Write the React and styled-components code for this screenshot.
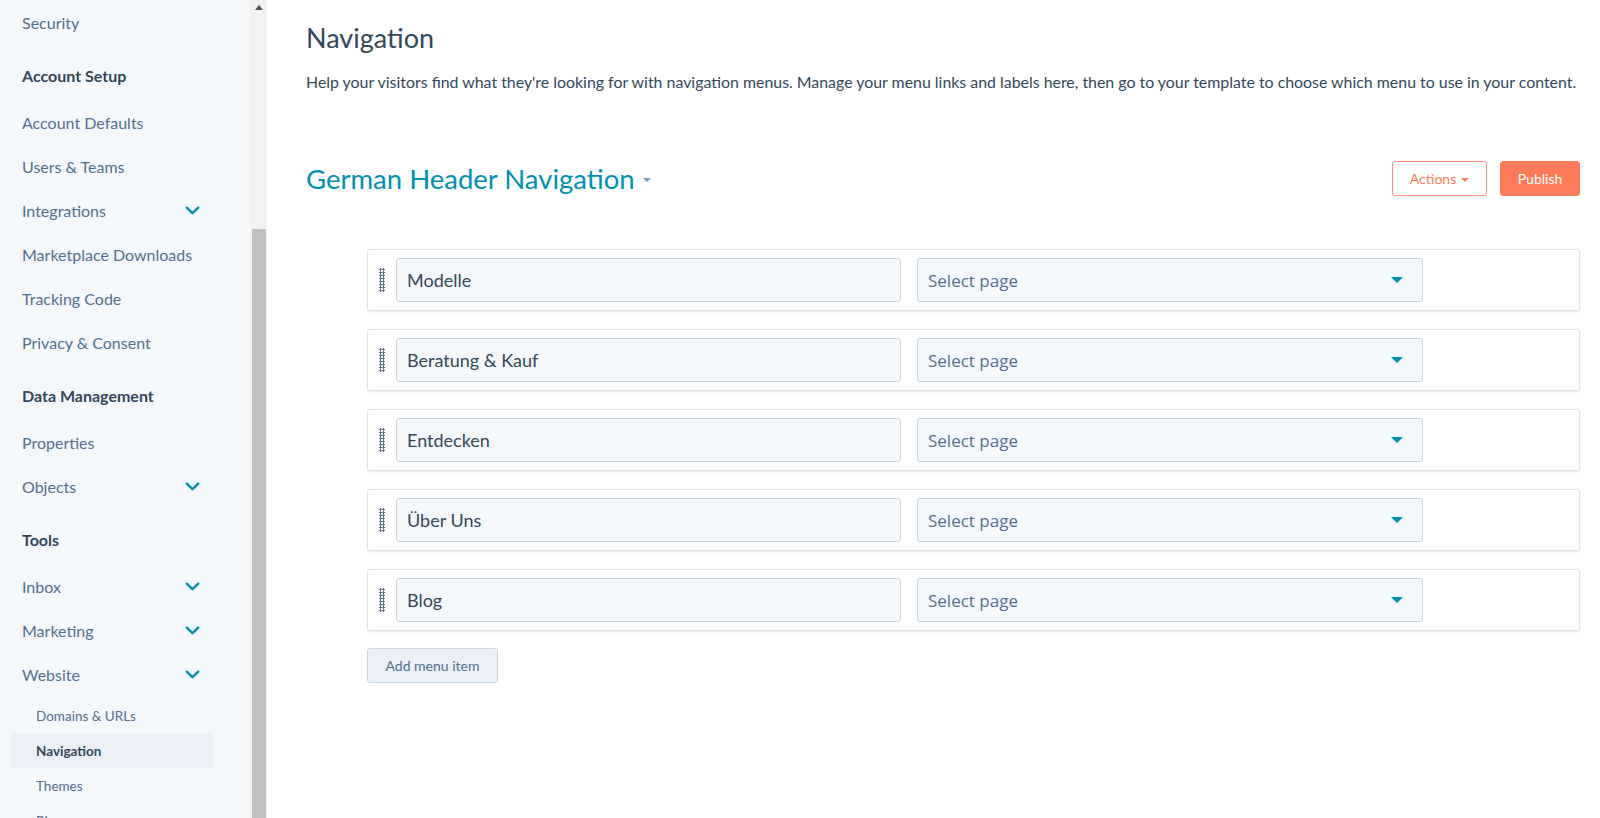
import React from "react";
import styled, { createGlobalStyle } from "styled-components";

const GlobalStyle = createGlobalStyle`
  html, body { margin: 0; padding: 0; height: 100%; }
  body {
    font-family: Lato, "Noto Sans", "Liberation Sans", sans-serif;
    color: #33475b;
    background: #fff;
    overflow: hidden;
  }
  #root { height: 100%; }
`;

const Page = styled.div`
  display: flex;
  height: 818px;
  overflow: hidden;
`;

const Sidebar = styled.nav`
  width: 250px;
  flex-shrink: 0;
  background: #f5f8fa;
  display: flex;
  flex-direction: column;
  overflow: hidden;
`;

const Scrollbar = styled.div`
  width: 17px;
  flex-shrink: 0;
  background: #f1f1f1;
  display: flex;
  flex-direction: column;
  align-items: center;
`;

const ScrollArrow = styled.div`
  width: 0;
  height: 0;
  margin-top: 5px;
  border-left: 4px solid transparent;
  border-right: 4px solid transparent;
  border-bottom: 5px solid #505050;
`;

const ScrollThumb = styled.div`
  width: 14px;
  margin-top: 219px;
  flex: 1;
  background: #c1c1c1;
`;

const NavItem = styled.div`
  display: flex;
  align-items: center;
  justify-content: space-between;
  height: 44px;
  padding: 0 50px 0 22px;
  font-size: 16px;
  color: #516f90;
  flex-shrink: 0;
`;

const SectionTitle = styled.div`
  display: flex;
  align-items: center;
  height: 50px;
  margin-top: 6px;
  padding-left: 22px;
  font-size: 16px;
  font-weight: 700;
  color: #33475b;
  flex-shrink: 0;
`;

const SubList = styled.div`
  display: flex;
  flex-direction: column;
  margin-top: 2px;
`;

const SubItem = styled.div`
  display: flex;
  align-items: center;
  height: 35px;
  margin: 0 36px 0 10px;
  padding-left: 26px;
  font-size: 13.5px;
  border-radius: 3px;
  flex-shrink: 0;
  font-weight: ${(p) => (p.$active ? 700 : 400)};
  color: ${(p) => (p.$active ? "#33475b" : "#516f90")};
  background: ${(p) => (p.$active ? "#eaf0f6" : "transparent")};
`;

const Chevron = () => (
  <svg width="15" height="9" viewBox="0 0 15 9" fill="none">
    <path d="M1.8 1.6 7.5 7.2l5.7-5.6" stroke="#0091ae" strokeWidth="2.4" strokeLinecap="round" strokeLinejoin="round" />
  </svg>
);

const Main = styled.main`
  flex: 1;
  min-width: 0;
  padding: 22px 20px 0 39px;
`;

const PageTitle = styled.h1`
  margin: 0;
  font-size: 27px;
  font-weight: 400;
  line-height: 32px;
  color: #33475b;
`;

const Description = styled.p`
  margin: 18px 0 0;
  font-size: 15.9px;
  line-height: 20px;
  color: #33475b;
  white-space: nowrap;
`;

const HeaderRow = styled.div`
  display: flex;
  align-items: center;
  justify-content: space-between;
  margin-top: 69px;
`;

const MenuName = styled.div`
  display: flex;
  align-items: center;
  gap: 8px;
  font-size: 27.5px;
  color: #0091ae;
  line-height: 35px;
`;

const SmallCaret = styled.span`
  width: 0;
  height: 0;
  margin-top: 2px;
  border-left: 4.5px solid transparent;
  border-right: 4.5px solid transparent;
  border-top: 4.5px solid ${(p) => p.$color};
`;

const Buttons = styled.div`
  display: flex;
  gap: 13px;
`;

const Button = styled.button`
  height: 35px;
  display: flex;
  align-items: center;
  justify-content: center;
  gap: 5px;
  border-radius: 3px;
  font-family: inherit;
  font-size: 14px;
  width: ${(p) => (p.$primary ? "80px" : "95px")};
  padding: 0;
  border: 1px solid ${(p) => (p.$primary ? "#ff7a59" : "#ff8f73")};
  color: ${(p) => (p.$primary ? "#fff" : "#ff7a59")};
  background: ${(p) => (p.$primary ? "#ff7a59" : "#fff")};
`;

const List = styled.div`
  margin: 53px 0 0 61px;
  display: flex;
  flex-direction: column;
  gap: 18px;
`;

const Row = styled.div`
  height: 62px;
  box-sizing: border-box;
  border: 1px solid #dfe3eb;
  border-radius: 3px;
  box-shadow: 0 1px 2px rgba(45, 62, 80, 0.1);
  display: flex;
  align-items: center;
  padding-left: 11px;
  background: #fff;
`;

const Handle = styled.div`
  width: 6px;
  height: 24px;
  margin-right: 11px;
  background-image: radial-gradient(circle, #425b76 1px, transparent 1.2px);
  background-size: 3px 3px;
  opacity: 0.85;
`;

const Field = styled.div`
  height: 44px;
  box-sizing: border-box;
  width: ${(p) => p.$w}px;
  background: #f5f8fa;
  border: 1px solid #cbd6e2;
  border-radius: 3px;
  display: flex;
  align-items: center;
  justify-content: space-between;
  padding: 0 19px 0 10px;
  font-size: 18px;
  color: #33475b;
`;

const SelectLabel = styled.span`
  font-family: "Open Sans", "Noto Sans", sans-serif;
  font-size: 17px;
  color: #516f90;
`;

const SelectCaret = styled.span`
  width: 0;
  height: 0;
  border-left: 6px solid transparent;
  border-right: 6px solid transparent;
  border-top: 6px solid #0091ae;
`;

const Spacer = styled.div`
  width: 16px;
`;

const AddButton = styled.button`
  margin: 17px 0 0 61px;
  height: 35px;
  width: 131px;
  padding: 0;
  font-family: inherit;
  font-size: 14px;
  color: #506e91;
  background: #eaf0f6;
  border: 1px solid #cbd6e2;
  border-radius: 3px;
`;

const items = ["Modelle", "Beratung & Kauf", "Entdecken", "Über Uns", "Blog"];

export default function App() {
  return (
    <Page>
      <GlobalStyle />
      <Sidebar>
        <NavItem>Security</NavItem>
        <SectionTitle>Account Setup</SectionTitle>
        <NavItem>Account Defaults</NavItem>
        <NavItem>Users &amp; Teams</NavItem>
        <NavItem>Integrations <Chevron /></NavItem>
        <NavItem>Marketplace Downloads</NavItem>
        <NavItem>Tracking Code</NavItem>
        <NavItem>Privacy &amp; Consent</NavItem>
        <SectionTitle>Data Management</SectionTitle>
        <NavItem>Properties</NavItem>
        <NavItem>Objects <Chevron /></NavItem>
        <SectionTitle>Tools</SectionTitle>
        <NavItem>Inbox <Chevron /></NavItem>
        <NavItem>Marketing <Chevron /></NavItem>
        <NavItem>Website <Chevron /></NavItem>
        <SubList>
          <SubItem>Domains &amp; URLs</SubItem>
          <SubItem $active>Navigation</SubItem>
          <SubItem>Themes</SubItem>
          <SubItem>Blogs</SubItem>
        </SubList>
      </Sidebar>
      <Scrollbar>
        <ScrollArrow />
        <ScrollThumb />
      </Scrollbar>
      <Main>
        <PageTitle>Navigation</PageTitle>
        <Description>
          Help your visitors find what they're looking for with navigation menus. Manage your menu links and labels here, then go to your template to choose which menu to use in your content.
        </Description>
        <HeaderRow>
          <MenuName>
            German Header Navigation <SmallCaret $color="#7c98b6" />
          </MenuName>
          <Buttons>
            <Button>
              Actions <SmallCaret $color="#ff7a59" />
            </Button>
            <Button $primary>Publish</Button>
          </Buttons>
        </HeaderRow>
        <List>
          {items.map((label) => (
            <Row key={label}>
              <Handle />
              <Field $w={505}>{label}</Field>
              <Spacer />
              <Field $w={506}>
                <SelectLabel>Select page</SelectLabel>
                <SelectCaret />
              </Field>
            </Row>
          ))}
        </List>
        <AddButton>Add menu item</AddButton>
      </Main>
    </Page>
  );
}
